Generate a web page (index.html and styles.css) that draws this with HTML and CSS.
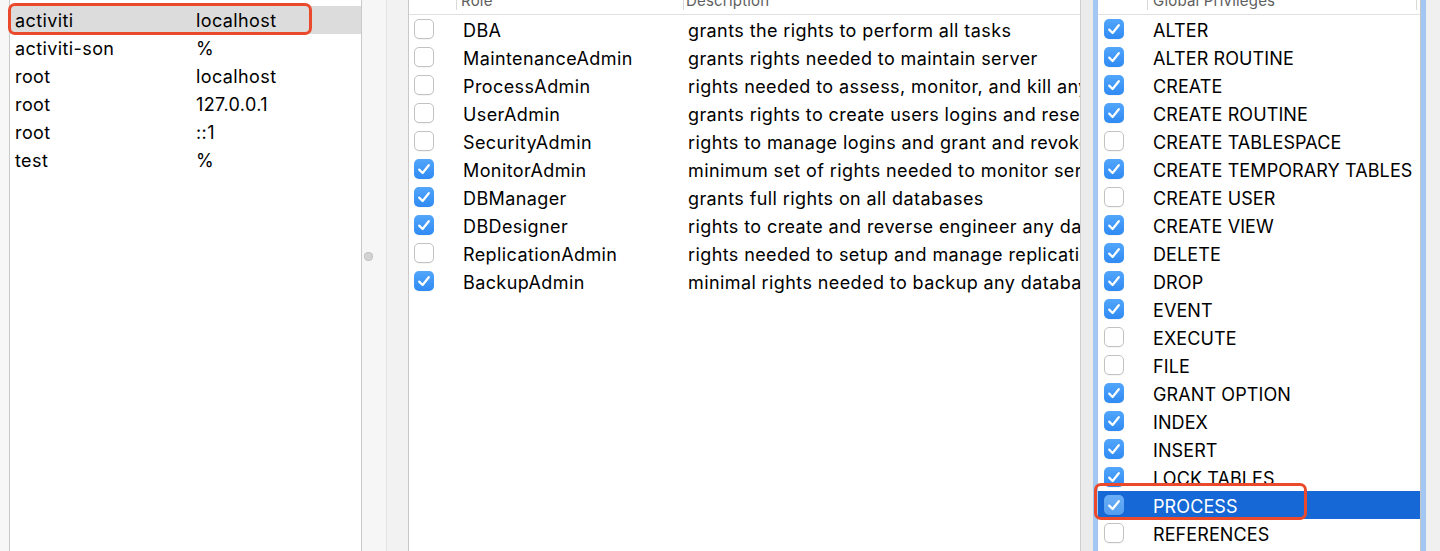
FILE: index.html
```html
<!DOCTYPE html>
<html>
<head>
<meta charset="utf-8">
<title>Users and Privileges</title>
<link rel="stylesheet" href="styles.css">
</head>
<body>
<div class="window">
  <div class="edge-left"></div>

  <div class="accounts">
    <div class="acct-row selected"><span class="acct-user">activiti</span><span class="acct-host">localhost</span></div>
    <div class="acct-row"><span class="acct-user">activiti-son</span><span class="acct-host">%</span></div>
    <div class="acct-row"><span class="acct-user">root</span><span class="acct-host">localhost</span></div>
    <div class="acct-row"><span class="acct-user">root</span><span class="acct-host">127.0.0.1</span></div>
    <div class="acct-row"><span class="acct-user">root</span><span class="acct-host">::1</span></div>
    <div class="acct-row"><span class="acct-user">test</span><span class="acct-host">%</span></div>
    <div class="callout callout-acct"></div>
  </div>

  <div class="splitter"><span class="grip"></span></div>
  <div class="gutter"></div>

  <div class="roles">
    <div class="thead">
      <div class="th th-check"></div>
      <div class="th th-role"><span class="th-label">Role</span></div>
      <div class="th th-desc"><span class="th-label">Description</span></div>
    </div>
    <div class="role-row"><span class="cell-check"><span class="cb"></span></span><span class="cell-role">DBA</span><span class="cell-desc">grants the rights to perform all tasks</span></div>
    <div class="role-row"><span class="cell-check"><span class="cb"></span></span><span class="cell-role">MaintenanceAdmin</span><span class="cell-desc">grants rights needed to maintain server</span></div>
    <div class="role-row"><span class="cell-check"><span class="cb"></span></span><span class="cell-role">ProcessAdmin</span><span class="cell-desc">rights needed to assess, monitor, and kill any user process running in server</span></div>
    <div class="role-row"><span class="cell-check"><span class="cb"></span></span><span class="cell-role">UserAdmin</span><span class="cell-desc">grants rights to create users logins and reset passwords</span></div>
    <div class="role-row"><span class="cell-check"><span class="cb"></span></span><span class="cell-role">SecurityAdmin</span><span class="cell-desc">rights to manage logins and grant and revoke server and database level permission</span></div>
    <div class="role-row"><span class="cell-check"><span class="cb on"><svg viewBox="0 0 20 20"><path d="M5.2 10.6 L8.6 14 L14.8 6.2"/></svg></span></span><span class="cell-role">MonitorAdmin</span><span class="cell-desc">minimum set of rights needed to monitor server</span></div>
    <div class="role-row"><span class="cell-check"><span class="cb on"><svg viewBox="0 0 20 20"><path d="M5.2 10.6 L8.6 14 L14.8 6.2"/></svg></span></span><span class="cell-role">DBManager</span><span class="cell-desc">grants full rights on all databases</span></div>
    <div class="role-row"><span class="cell-check"><span class="cb on"><svg viewBox="0 0 20 20"><path d="M5.2 10.6 L8.6 14 L14.8 6.2"/></svg></span></span><span class="cell-role">DBDesigner</span><span class="cell-desc">rights to create and reverse engineer any database schema</span></div>
    <div class="role-row"><span class="cell-check"><span class="cb"></span></span><span class="cell-role">ReplicationAdmin</span><span class="cell-desc">rights needed to setup and manage replication</span></div>
    <div class="role-row"><span class="cell-check"><span class="cb on"><svg viewBox="0 0 20 20"><path d="M5.2 10.6 L8.6 14 L14.8 6.2"/></svg></span></span><span class="cell-role">BackupAdmin</span><span class="cell-desc">minimal rights needed to backup any database</span></div>
  </div>

  <div class="gap"></div>

  <div class="privs-ring">
    <div class="privs">
      <div class="thead">
        <div class="th th-pcheck"></div>
        <div class="th th-priv"><span class="th-label">Global Privileges</span></div>
        <div class="th th-end"></div>
      </div>
      <div class="priv-row"><span class="cell-check"><span class="cb on"><svg viewBox="0 0 20 20"><path d="M5.2 10.6 L8.6 14 L14.8 6.2"/></svg></span></span><span class="cell-priv">ALTER</span></div>
      <div class="priv-row"><span class="cell-check"><span class="cb on"><svg viewBox="0 0 20 20"><path d="M5.2 10.6 L8.6 14 L14.8 6.2"/></svg></span></span><span class="cell-priv">ALTER ROUTINE</span></div>
      <div class="priv-row"><span class="cell-check"><span class="cb on"><svg viewBox="0 0 20 20"><path d="M5.2 10.6 L8.6 14 L14.8 6.2"/></svg></span></span><span class="cell-priv">CREATE</span></div>
      <div class="priv-row"><span class="cell-check"><span class="cb on"><svg viewBox="0 0 20 20"><path d="M5.2 10.6 L8.6 14 L14.8 6.2"/></svg></span></span><span class="cell-priv">CREATE ROUTINE</span></div>
      <div class="priv-row"><span class="cell-check"><span class="cb"></span></span><span class="cell-priv">CREATE TABLESPACE</span></div>
      <div class="priv-row"><span class="cell-check"><span class="cb on"><svg viewBox="0 0 20 20"><path d="M5.2 10.6 L8.6 14 L14.8 6.2"/></svg></span></span><span class="cell-priv">CREATE TEMPORARY TABLES</span></div>
      <div class="priv-row"><span class="cell-check"><span class="cb"></span></span><span class="cell-priv">CREATE USER</span></div>
      <div class="priv-row"><span class="cell-check"><span class="cb on"><svg viewBox="0 0 20 20"><path d="M5.2 10.6 L8.6 14 L14.8 6.2"/></svg></span></span><span class="cell-priv">CREATE VIEW</span></div>
      <div class="priv-row"><span class="cell-check"><span class="cb on"><svg viewBox="0 0 20 20"><path d="M5.2 10.6 L8.6 14 L14.8 6.2"/></svg></span></span><span class="cell-priv">DELETE</span></div>
      <div class="priv-row"><span class="cell-check"><span class="cb on"><svg viewBox="0 0 20 20"><path d="M5.2 10.6 L8.6 14 L14.8 6.2"/></svg></span></span><span class="cell-priv">DROP</span></div>
      <div class="priv-row"><span class="cell-check"><span class="cb on"><svg viewBox="0 0 20 20"><path d="M5.2 10.6 L8.6 14 L14.8 6.2"/></svg></span></span><span class="cell-priv">EVENT</span></div>
      <div class="priv-row"><span class="cell-check"><span class="cb"></span></span><span class="cell-priv">EXECUTE</span></div>
      <div class="priv-row"><span class="cell-check"><span class="cb"></span></span><span class="cell-priv">FILE</span></div>
      <div class="priv-row"><span class="cell-check"><span class="cb on"><svg viewBox="0 0 20 20"><path d="M5.2 10.6 L8.6 14 L14.8 6.2"/></svg></span></span><span class="cell-priv">GRANT OPTION</span></div>
      <div class="priv-row"><span class="cell-check"><span class="cb on"><svg viewBox="0 0 20 20"><path d="M5.2 10.6 L8.6 14 L14.8 6.2"/></svg></span></span><span class="cell-priv">INDEX</span></div>
      <div class="priv-row"><span class="cell-check"><span class="cb on"><svg viewBox="0 0 20 20"><path d="M5.2 10.6 L8.6 14 L14.8 6.2"/></svg></span></span><span class="cell-priv">INSERT</span></div>
      <div class="priv-row"><span class="cell-check"><span class="cb on"><svg viewBox="0 0 20 20"><path d="M5.2 10.6 L8.6 14 L14.8 6.2"/></svg></span></span><span class="cell-priv">LOCK TABLES</span></div>
      <div class="priv-row selected"><span class="cell-check"><span class="cb on"><svg viewBox="0 0 20 20"><path d="M5.2 10.6 L8.6 14 L14.8 6.2"/></svg></span></span><span class="cell-priv">PROCESS</span></div>
      <div class="priv-row"><span class="cell-check"><span class="cb"></span></span><span class="cell-priv">REFERENCES</span></div>
      <div class="priv-row"><span class="cell-check"><span class="cb"></span></span><span class="cell-priv">RELOAD</span></div>
      <div class="callout callout-priv"></div>
    </div>
  </div>

  <div class="edge-right"></div>
</div>
</body>
</html>
```

FILE: styles.css
```css
* { box-sizing: border-box; }

html, body {
  margin: 0;
  padding: 0;
  background: #ececec;
}

body {
  font-family: Inter, "Open Sans", "Liberation Sans", sans-serif;
  font-size: 18px;
  color: #000;
}

.window {
  display: flex;
  width: 1440px;
  height: 551px;
  overflow: hidden;
}

.edge-left {
  width: 10px;
  flex: none;
  background: #f7f7f7;
  border-right: 1px solid #c9c9c9;
}

/* ---------- accounts list ---------- */
.accounts {
  position: relative;
  width: 352px;
  flex: none;
  background: #fff;
  border-right: 1px solid #c9c9c9;
  padding-top: 6px;
  letter-spacing: 0.4px;
}

.acct-row {
  display: flex;
  height: 28px;
  line-height: 29px;
  white-space: nowrap;
}

.acct-row.selected { background: #dcdcdc; }

.acct-user {
  width: 186px;
  padding-left: 5px;
}

.acct-host { padding-left: 0; }

/* ---------- splitter ---------- */
.splitter {
  width: 25px;
  flex: none;
  background: #f6f6f6;
  border-right: 1px solid #e2e2e2;
  display: flex;
  align-items: flex-start;
}

.grip {
  width: 9px;
  height: 9px;
  margin: 252px 0 0 2px;
  border-radius: 50%;
  background: #d3d3d3;
  box-shadow: inset 0 0 0 1px #c4c4c4;
}

.gutter {
  width: 21px;
  flex: none;
  background: #f2f2f2;
}

/* ---------- tables shared ---------- */
.thead {
  display: flex;
  height: 15px;
  border-bottom: 1px solid #e1e1e1;
  background: #fff;
}

.th {
  height: 10px;
  white-space: nowrap;
}

.th-label {
  display: block;
  font-size: 15px;
  line-height: 15px;
  margin-top: -7px;
  color: #5e5e5e;
  letter-spacing: 0.2px;
}

.cb {
  display: block;
  width: 20px;
  height: 20px;
  border-radius: 5px;
  background: #fff;
  border: 1px solid #c2c2c2;
  box-shadow: 0 1px 0 rgba(0,0,0,0.04);
}

.cb.on {
  border: none;
  background: linear-gradient(#52a6fb, #2f8af3);
}

.cb svg {
  display: block;
  width: 20px;
  height: 20px;
}

.cb svg path {
  fill: none;
  stroke: #fff;
  stroke-width: 2.2;
  stroke-linecap: round;
  stroke-linejoin: round;
}

/* ---------- roles table ---------- */
.roles {
  width: 673px;
  flex: none;
  background: #fff;
  border-left: 1px solid #c9c9c9;
  border-right: 1px solid #cfcfcf;
  overflow: hidden;
  letter-spacing: 0.4px;
}

.th-check { width: 47px; flex: none; }
.th-role {
  width: 227px;
  flex: none;
  border-left: 1px solid #d8d8d8;
  padding-left: 4px;
}
.th-desc {
  flex: 1;
  border-left: 1px solid #d8d8d8;
  padding-left: 2px;
}

.role-row {
  display: flex;
  align-items: center;
  height: 28px;
  white-space: nowrap;
}

.cell-check {
  width: 48px;
  flex: none;
  padding-left: 5px;
}

.cell-role {
  width: 226px;
  flex: none;
  padding-left: 6px;
  line-height: 28px;
  margin-top: 4px;
}

.cell-desc {
  flex: 1;
  padding-left: 5px;
  line-height: 28px;
  margin-top: 4px;
  overflow: hidden;
}

.gap {
  width: 12px;
  flex: none;
  background: #ebebeb;
}

/* ---------- privileges list ---------- */
.privs-ring {
  width: 333px;
  flex: none;
  border-left: 5px solid #a2c7f2;
  border-right: 5px solid #a2c7f2;
}

.privs {
  position: relative;
  height: 100%;
  background: #fff;
  border-right: 1px solid #c6c6c6;
  letter-spacing: 0.1px;
}

.th-pcheck { width: 49px; flex: none; }
.th-priv {
  width: 269px;
  flex: none;
  border-left: 1px solid #d8d8d8;
  padding-left: 5px;
}
.th-end {
  flex: 1;
  border-left: 1px solid #d8d8d8;
}

.priv-row {
  display: flex;
  align-items: center;
  height: 28px;
  white-space: nowrap;
}

.priv-row .cell-check {
  width: 49px;
  padding-left: 6px;
}

.cell-priv {
  padding-left: 6px;
  line-height: 28px;
  margin-top: 4px;
}

.priv-row.selected {
  background: #1568d5;
  color: #fff;
}

.priv-row.selected .cb.on {
  background: linear-gradient(#6aaef6, #539ef0);
}

.edge-right {
  flex: 1;
  background: #f0f0f0;
}

/* ---------- red annotation callouts ---------- */
.callout {
  position: absolute;
  border: 3px solid #ea4a2b;
  border-radius: 7px;
  pointer-events: none;
}

.callout-acct {
  left: -2px;
  top: 3px;
  width: 304px;
  height: 32px;
}

.callout-priv {
  left: -4px;
  top: 483px;
  width: 213px;
  height: 37px;
}
```
